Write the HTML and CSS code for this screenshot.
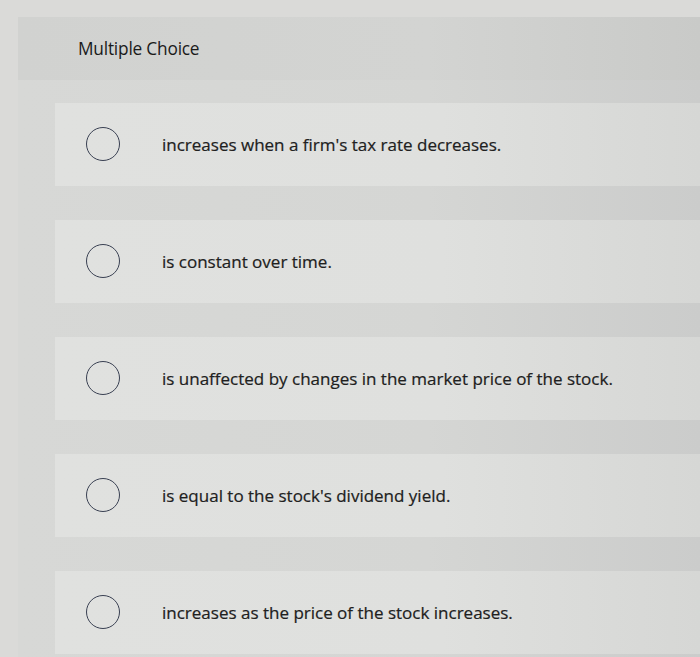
FILE: index.html
```html
<!DOCTYPE html>
<html>
<head>
<meta charset="utf-8">
<link rel="stylesheet" href="styles.css">
</head>
<body>
<div class="panel">
  <div class="header"><h1 class="title">Multiple Choice</h1></div>
  <div class="options">
    <div class="option"><span class="radio"></span><span class="label">increases when a firm's tax rate decreases.</span></div>
    <div class="option"><span class="radio"></span><span class="label">is constant over time.</span></div>
    <div class="option"><span class="radio"></span><span class="label">is unaffected by changes in the market price of the stock.</span></div>
    <div class="option"><span class="radio"></span><span class="label">is equal to the stock's dividend yield.</span></div>
    <div class="option"><span class="radio"></span><span class="label">increases as the price of the stock increases.</span></div>
  </div>
</div>
</body>
</html>
```
FILE: styles.css
```css
html, body {
  margin: 0;
  padding: 0;
}
body {
  background: #dadad8;
  font-family: "Open Sans", "Liberation Sans", sans-serif;
  color: #232323;
  height: 657px;
  overflow: hidden;
}
.panel {
  margin: 17px 0 0 18px;
  background: linear-gradient(90deg, #d7d8d6 0%, #d5d6d4 60%, #cbcccb 100%);
}
.header {
  height: 63px;
  display: flex;
  align-items: center;
  padding-left: 60px;
  background: linear-gradient(90deg, #d1d2d0 0%, #d3d4d2 60%, #c9cac8 100%);
}
.title {
  margin: 0;
  font-size: 17.3px;
  font-weight: 400;
  letter-spacing: -0.2px;
  color: #1a1a1a;
}
.options {
  padding: 23px 0 10px 37px;
  display: flex;
  flex-direction: column;
  gap: 34px;
}
.option {
  height: 83px;
  display: flex;
  align-items: center;
  padding-left: 31px;
  background: linear-gradient(90deg, #e0e1df 0%, #dfe0de 60%, #d6d7d5 100%);
}
.radio {
  width: 34px;
  height: 34px;
  margin-top: -2px;
  box-sizing: border-box;
  border: 1.7px solid #394052;
  border-radius: 50%;
  flex: none;
}
.label {
  margin-left: 42px;
  font-size: 17px;
  color: #202020;
  -webkit-text-stroke: 0.2px #202020;
}
```
